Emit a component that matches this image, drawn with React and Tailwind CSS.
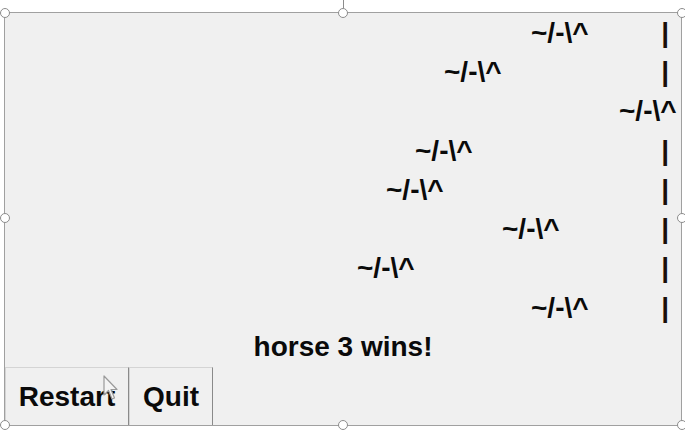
import React from "react";

const horses = [526, 439, 614, 410, 381, 497, 352, 526];
const winner = 2;
const font = { fontFamily: '"Liberation Sans", Arial, sans-serif' };

function Handle({ x, y }) {
  return (
    <div
      className="absolute w-[10px] h-[10px] rounded-full border border-[#8c8c8c] bg-white -translate-x-1/2 -translate-y-1/2"
      style={{ left: x, top: y }}
    />
  );
}

export default function App() {
  return (
    <div className="relative w-[685px] h-[430px] bg-white overflow-hidden" style={font}>
      <div className="ml-[4px] mt-[12px] w-[678px] h-[414px] border border-[#a0a0a0] bg-[#f0f0f0] flex flex-col text-[28px] font-bold text-[#0a0a0a] leading-none">
        {horses.map((x, i) => (
          <div key={i} className="h-[39.3px] flex items-center shrink-0">
            <span style={{ marginLeft: x - (i === 0 ? 0 : 0) }}>{"~/-\\^"}</span>
            {i !== winner && <span className="ml-auto mr-[12px] text-[#1a0f08]">|</span>}
          </div>
        ))}
        <div className="h-[40px] flex items-center justify-center shrink-0">horse 3 wins!</div>
        <div className="flex-1 flex">
          <div className="w-[124px] flex items-center justify-center border-t border-l border-r border-t-[#d4d4d4] border-l-[#d4d4d4] border-r-[#8a8a8a]">
            Restart
          </div>
          <div className="w-[84px] flex items-center justify-center border-t border-l border-r border-t-[#d4d4d4] border-l-[#d4d4d4] border-r-[#8a8a8a]">
            Quit
          </div>
        </div>
      </div>

      <div className="absolute left-[343px] top-0 w-px h-[8px] bg-[#8c8c8c]" />
      <Handle x={4.5} y={12.5} />
      <Handle x={343} y={12.5} />
      <Handle x={681.5} y={12.5} />
      <Handle x={4.5} y={218} />
      <Handle x={681.5} y={218} />
      <Handle x={4.5} y={425} />
      <Handle x={343} y={425} />
      <Handle x={681.5} y={425} />

      <svg className="absolute left-[103px] top-[375px]" width="16" height="26" viewBox="0 0 16 26">
        <path d="M1 1 L1 20 L5.5 15.5 L9 24 L11.5 23 L8 14.5 L14 14.5 Z" fill="#f4f4f4" stroke="#9a9a9a" strokeWidth="1.2" strokeLinejoin="round" />
      </svg>
    </div>
  );
}
